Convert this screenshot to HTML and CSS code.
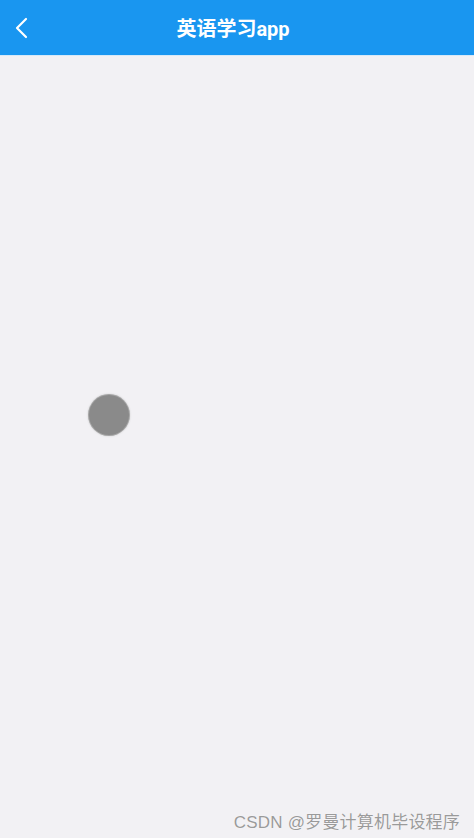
FILE: index.html
```html
<!DOCTYPE html>
<html lang="zh">
<head>
<meta charset="utf-8">
<link rel="stylesheet" href="styles.css">
</head>
<body>
<div class="app">
  <header class="topbar">
    <div class="back">
      <svg width="14" height="22" viewBox="0 0 14 22"><path d="M12 2 L3 11 L12 20" fill="none" stroke="#fff" stroke-width="2.2" stroke-linecap="round" stroke-linejoin="round"/></svg>
    </div>
    <h1 class="title">英语学习app</h1>
    <div class="spacer"></div>
  </header>
  <main class="content">
    <div class="loader"></div>
  </main>
  <div class="watermark">CSDN @罗曼计算机毕设程序</div>
</div>
</body>
</html>
```
FILE: styles.css
```css
html, body {
  margin: 0;
  padding: 0;
  height: 100%;
}
body {
  background: #f2f1f4;
  font-family: "Roboto", "Noto Sans CJK SC", sans-serif;
}
.app {
  position: relative;
  height: 838px;
  display: flex;
  flex-direction: column;
}
.topbar {
  height: 56px;
  background: #1996f0;
  display: grid;
  grid-template-columns: 60px 1fr 68px;
  align-items: center;
  border-bottom: 1px solid #d6e9f8;
  box-sizing: border-box;
}
.back {
  padding-left: 14px;
  display: flex;
  align-items: center;
  padding-top: 1px;
}
.title {
  margin: 0;
  text-align: center;
  color: #fff;
  font-size: 20px;
  font-weight: 700;
  letter-spacing: 0;
}
.content {
  flex: 1;
  padding-top: 339px;
  padding-left: 89px;
}
.loader {
  width: 40px;
  height: 40px;
  border-radius: 50%;
  background: #8a8a8a;
  box-shadow: 0 0 0 1px #a5a5a5, 0 0 2px 1px #c8c8c8;
}
.watermark {
  position: absolute;
  right: 14px;
  bottom: 5px;
  font-family: "Liberation Sans", "Noto Sans CJK SC", sans-serif;
  font-size: 17px;
  letter-spacing: 0.2px;
  color: #9a9a9a;
  text-shadow: 0 0 1px #fff;
}
```
